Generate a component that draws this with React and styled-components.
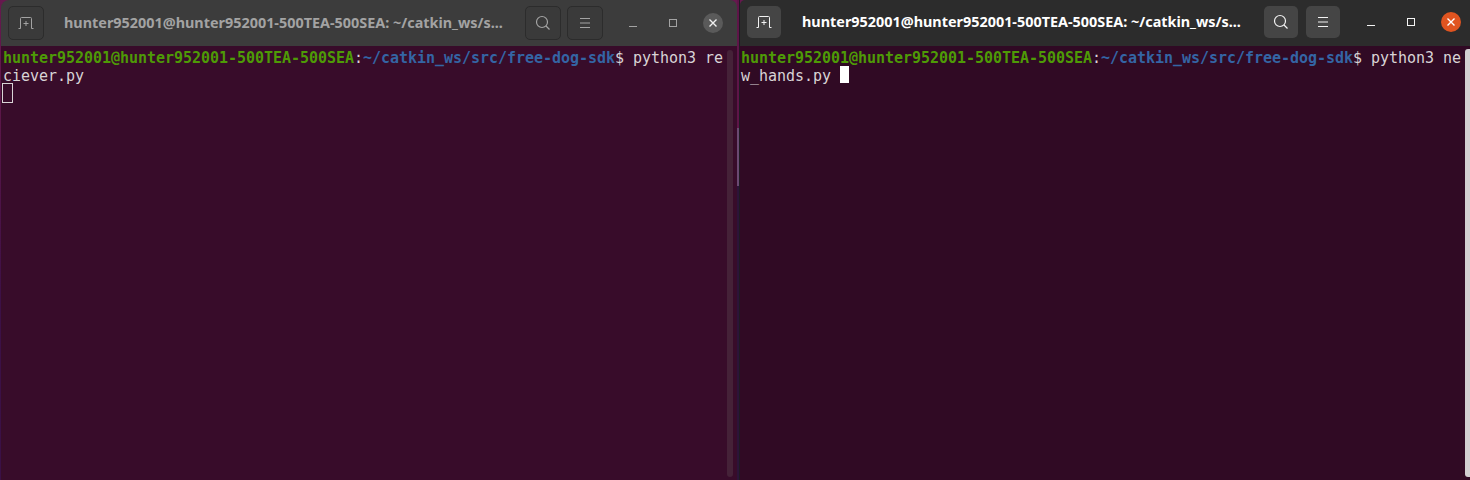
import React from 'react';
import styled, { createGlobalStyle } from 'styled-components';

const Global = createGlobalStyle`
  html, body {
    margin: 0;
    padding: 0;
    width: 1470px;
    height: 480px;
    overflow: hidden;
    background: #300a24;
  }
`;

const Desktop = styled.div`
  display: flex;
  width: 1470px;
  height: 480px;
  padding-left: 1px;
  box-sizing: border-box;
  background: linear-gradient(180deg, #66194e 0, #5a1648 120px, #3c1046 300px, #3a1046 100%);
`;

const Divider = styled.div`
  width: 3px;
  flex: none;
  display: flex;
  flex-direction: column;
  box-sizing: border-box;
  background: #5e1a4a;
  border-right: 1px solid #1f1a22;
`;

const DividerTop = styled.div`
  height: 128px;
  flex: none;
  background: #5e1548;
`;

const DividerHandle = styled.div`
  height: 58px;
  flex: none;
  background: #6a4a72;
`;

const DividerRest = styled.div`
  flex: 1;
  background: #2c1438;
`;

const Window = styled.section`
  flex: ${p => (p.$active ? '1' : 'none')};
  width: ${p => (p.$active ? 'auto' : '736px')};
  min-width: 0;
  display: flex;
  flex-direction: column;
  height: 480px;
  overflow: hidden;
  border-radius: ${p => (p.$active ? '5px 0 0 0' : '8px 7px 0 0')};
`;

const TitleBar = styled.header`
  height: 46px;
  flex: none;
  display: flex;
  align-items: center;
  box-sizing: border-box;
  padding: 0 ${p => (p.$active ? '9px' : '14px')} ${p => (p.$active ? '2px' : '0')} 7px;
  background: ${p => (p.$active ? '#2c2c2c' : '#3c3c3c')};
  color: ${p => (p.$active ? '#ffffff' : '#a3a3a3')};
`;

const HeaderButton = styled.div`
  width: ${p => (p.$active ? '34px' : '36px')};
  height: ${p => (p.$active ? '32px' : '34px')};
  flex: none;
  box-sizing: border-box;
  display: flex;
  align-items: center;
  justify-content: center;
  border-radius: 5px;
  background: ${p => (p.$active ? '#454545' : '#3a3a3a')};
  border: ${p => (p.$active ? 'none' : '1px solid #2c2c2c')};
  color: ${p => (p.$active ? '#f2f2f2' : '#a3a3a3')};
`;

const Title = styled.div`
  flex: 1;
  min-width: 0;
  padding-left: ${p => (p.$active ? '21px' : '20px')};
  font-family: "Noto Sans", "Open Sans", sans-serif;
  font-weight: 700;
  font-size: 14.4px;
  line-height: 18px;
  white-space: nowrap;
`;

const ButtonGroup = styled.div`
  display: flex;
  gap: ${p => (p.$active ? '8px' : '6px')};
  margin-right: ${p => (p.$active ? '11px' : '10px')};
`;

const WindowControls = styled.div`
  display: flex;
  align-items: center;
  flex: none;
`;

const ControlButton = styled.div`
  width: 40px;
  height: 20px;
  display: flex;
  align-items: center;
  justify-content: center;
  color: ${p => (p.$active ? '#f4f4f4' : '#a3a3a3')};
`;

const CloseButton = styled.div`
  width: 20px;
  height: 20px;
  margin-left: 10px;
  border-radius: 50%;
  display: flex;
  align-items: center;
  justify-content: center;
  background: ${p => (p.$active ? '#e05420' : '#5a5a5a')};
  color: ${p => (p.$active ? '#ffffff' : '#f0f0f0')};
`;

const Terminal = styled.main`
  flex: 1;
  display: flex;
  min-height: 0;
  background: ${p => (p.$active ? '#300a24' : '#380c2a')};
`;

const Screen = styled.div`
  flex: 1;
  min-width: 0;
  padding: 3px 0 0 ${p => (p.$active ? '1px' : '2px')};
  font-family: "DejaVu Sans Mono", "Liberation Mono", monospace;
  font-size: 15px;
  letter-spacing: -0.03px;
  color: #d9d4d6;
`;

const Line = styled.div`
  height: 18px;
  line-height: 18px;
  white-space: pre;
`;

const User = styled.span`
  color: #4e9a06;
  font-weight: 700;
`;

const Path = styled.span`
  color: #3465a4;
  font-weight: 700;
`;

const Cursor = styled.span`
  display: inline-block;
  vertical-align: top;
  box-sizing: border-box;
  width: ${p => (p.$active ? '9px' : '11px')};
  height: ${p => (p.$active ? '17px' : '20px')};
  margin: ${p => (p.$active ? '-1px 0 0 0' : '-2px 0 0 -1px')};
  background: ${p => (p.$active ? '#ffffff' : 'transparent')};
  border: 1px solid ${p => (p.$active ? '#ffffff' : '#d9d4d6')};
`;

const ScrollThumb = styled.div`
  flex: none;
  width: ${p => (p.$active ? '5px' : '6px')};
  margin: ${p => (p.$active ? '3px 0 3px 0' : '4px 4px 3px 0')};
  border-radius: ${p => (p.$active ? '3px 0 0 3px' : '3px')};
  background: ${p => (p.$active ? '#d2d0d1' : '#452238')};
`;

const NewTabIcon = () => (
  <svg width="16" height="16" viewBox="0 0 16 16" fill="none" stroke="currentColor" strokeWidth="1">
    <path d="M0.5 13.5h2V3.5q0-1 1-1h9q1 0 1 1v10h2" />
    <path d="M8 6v5M5.5 8.5h5" />
  </svg>
);

const SearchIcon = () => (
  <svg width="16" height="16" viewBox="0 0 16 16" fill="none" stroke="currentColor" strokeWidth="1.2">
    <circle cx="7" cy="7" r="5.5" />
    <path d="M11 11l3.5 3.5" />
  </svg>
);

const MenuIcon = () => (
  <svg width="12" height="12" viewBox="0 0 12 12" fill="none" stroke="currentColor" strokeWidth="1">
    <path d="M1 1.5h10M1 6h10M1 10.5h10" />
  </svg>
);

const MinimizeIcon = () => (
  <svg width="10" height="10" viewBox="0 0 10 10" fill="none" stroke="currentColor" strokeWidth="1">
    <path d="M1 8.5h8" />
  </svg>
);

const MaximizeIcon = () => (
  <svg width="10" height="10" viewBox="0 0 10 10" fill="none" stroke="currentColor" strokeWidth="1">
    <rect x="1.5" y="1.5" width="7" height="7" />
  </svg>
);

const CloseIcon = () => (
  <svg width="10" height="10" viewBox="0 0 10 10" fill="none" stroke="currentColor" strokeWidth="1.4">
    <path d="M1.5 1.5l7 7M8.5 1.5l-7 7" />
  </svg>
);

const TerminalWindow = ({ active, command, children }) => (
  <Window $active={active}>
    <TitleBar $active={active}>
      <HeaderButton $active={active}><NewTabIcon /></HeaderButton>
      <Title $active={active}>hunter952001@hunter952001-500TEA-500SEA: ~/catkin_ws/s...</Title>
      <ButtonGroup $active={active}>
        <HeaderButton $active={active}><SearchIcon /></HeaderButton>
        <HeaderButton $active={active}><MenuIcon /></HeaderButton>
      </ButtonGroup>
      <WindowControls>
        <ControlButton $active={active}><MinimizeIcon /></ControlButton>
        <ControlButton $active={active}><MaximizeIcon /></ControlButton>
        <CloseButton $active={active}><CloseIcon /></CloseButton>
      </WindowControls>
    </TitleBar>
    <Terminal $active={active}>
      <Screen $active={active}>
        <Line>
          <User>hunter952001@hunter952001-500TEA-500SEA</User>:<Path>~/catkin_ws/src/free-dog-sdk</Path>{command}
        </Line>
        {children}
      </Screen>
      <ScrollThumb $active={active} />
    </Terminal>
  </Window>
);

export default function App() {
  return (
    <>
      <Global />
      <Desktop>
        <TerminalWindow command="$ python3 re">
          <Line>ciever.py</Line>
          <Line><Cursor /></Line>
        </TerminalWindow>
        <Divider>
          <DividerTop />
          <DividerHandle />
          <DividerRest />
        </Divider>
        <TerminalWindow active command="$ python3 ne">
          <Line>w_hands.py <Cursor $active /></Line>
        </TerminalWindow>
      </Desktop>
    </>
  );
}
